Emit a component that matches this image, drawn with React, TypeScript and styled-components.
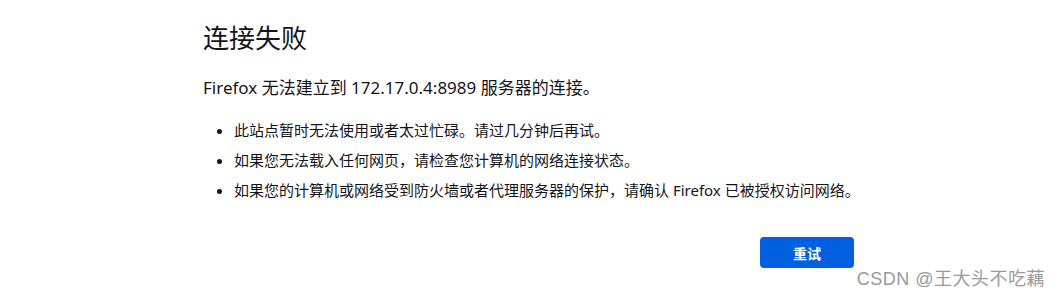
import React from 'react';
import styled, { createGlobalStyle } from 'styled-components';

const GlobalStyle = createGlobalStyle`
  html, body {
    margin: 0;
    padding: 0;
    background: #ffffff;
  }
  body {
    font-family: "Noto Sans", "Noto Sans CJK SC", sans-serif;
    color: #15141a;
  }
`;

const Page = styled.div`
  position: relative;
  width: 1061px;
  height: 299px;
  overflow: hidden;
`;

const Container = styled.main`
  width: 651px;
  margin-left: 203px;
  padding-top: 20px;
  display: flex;
  flex-direction: column;
`;

const Title = styled.h1`
  margin: 0;
  font-size: 26px;
  font-weight: 400;
  line-height: 36px;
`;

const Summary = styled.p`
  margin: 20px 0 0;
  font-size: 17px;
  line-height: 24px;
`;

const HintList = styled.ul`
  margin: 20px 0 0;
  padding-left: 31px;
  list-style: disc;
`;

const Hint = styled.li`
  font-size: 15px;
  line-height: 20px;
  margin-bottom: 10px;
  white-space: nowrap;
`;

const Actions = styled.div`
  display: flex;
  justify-content: flex-end;
  margin-top: 27px;
`;

const RetryButton = styled.button`
  width: 94px;
  height: 31px;
  border: none;
  border-radius: 4px;
  background: #0061e0;
  color: #ffffff;
  font-family: "Noto Sans", "Noto Sans CJK SC", sans-serif;
  font-size: 14px;
  font-weight: 700;
  cursor: pointer;
`;

const Watermark = styled.div`
  position: absolute;
  right: 16px;
  bottom: 9px;
  font-family: "Liberation Sans", "Noto Sans CJK SC", sans-serif;
  font-size: 18px;
  letter-spacing: 0.5px;
  color: #9a9a9a;
`;

const hints = [
  '此站点暂时无法使用或者太过忙碌。请过几分钟后再试。',
  '如果您无法载入任何网页，请检查您计算机的网络连接状态。',
  '如果您的计算机或网络受到防火墙或者代理服务器的保护，请确认 Firefox 已被授权访问网络。',
];

const App: React.FC = () => {
  return (
    <Page>
      <GlobalStyle />
      <Container>
        <Title>连接失败</Title>
        <Summary>Firefox 无法建立到 172.17.0.4:8989 服务器的连接。</Summary>
        <HintList>
          {hints.map((h) => (
            <Hint key={h}>{h}</Hint>
          ))}
        </HintList>
        <Actions>
          <RetryButton>重试</RetryButton>
        </Actions>
      </Container>
      <Watermark>CSDN @王大头不吃藕</Watermark>
    </Page>
  );
};

export default App;
